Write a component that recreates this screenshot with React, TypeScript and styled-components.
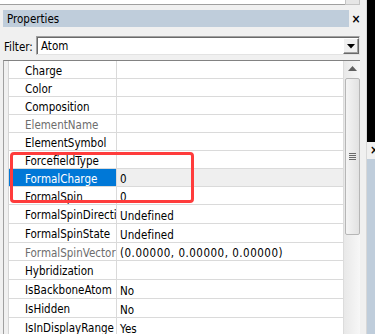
import React from 'react';
import styled, { createGlobalStyle } from 'styled-components';

const GlobalStyle = createGlobalStyle`
  html, body {
    margin: 0;
    padding: 0;
    background: #f0f0f0;
    font-family: "DejaVu Sans Condensed", "DejaVu Sans", "Liberation Sans", sans-serif;
    font-stretch: semi-condensed;
    font-size: 11.5px;
    color: #000;
  }
  #root {
    height: 334px;
    overflow: hidden;
  }
`;

interface PropRow {
  name: string;
  value?: string;
  readOnly?: boolean;
  selected?: boolean;
  height: number;
}

const rows: PropRow[] = [
  { name: 'Charge', height: 18 },
  { name: 'Color', height: 18 },
  { name: 'Composition', height: 18 },
  { name: 'ElementName', readOnly: true, height: 18 },
  { name: 'ElementSymbol', height: 18 },
  { name: 'ForcefieldType', height: 18 },
  { name: 'FormalCharge', value: '0', selected: true, height: 18 },
  { name: 'FormalSpin', value: '0', height: 18 },
  { name: 'FormalSpinDirection', value: 'Undefined', height: 19 },
  { name: 'FormalSpinState', value: 'Undefined', height: 19 },
  { name: 'FormalSpinVector', value: '(0.00000, 0.00000, 0.00000)', readOnly: true, height: 18 },
  { name: 'Hybridization', height: 19 },
  { name: 'IsBackboneAtom', value: 'No', height: 19 },
  { name: 'IsHidden', value: 'No', height: 19 },
  { name: 'IsInDisplayRange', value: 'Yes', height: 19 },
];

export default function App() {
  return (
    <>
      <GlobalStyle />
      <Window>
        <Panel>
          <TopStub>
            <StubBody />
            <StubScroll />
          </TopStub>

          <HeaderRow>
            <TitleBar>Properties</TitleBar>
            <CloseButton>×</CloseButton>
          </HeaderRow>

          <FilterRow>
            <FilterLabel>Filter:</FilterLabel>
            <Combo>
              <ComboText>Atom</ComboText>
              <DropButton>
                <svg width="8" height="5" viewBox="0 0 8 5">
                  <path d="M0 0 H8 L4 4.5 Z" fill="#000" />
                </svg>
              </DropButton>
            </Combo>
          </FilterRow>

          <Grid>
            <RowsArea>
              <Margin />
              <Rows>
                {rows.map((r) => (
                  <Row key={r.name} $h={r.height}>
                    <NameCell $selected={r.selected} $readOnly={r.readOnly}>
                      {r.name}
                    </NameCell>
                    <ValueCell $selected={r.selected} $wide={r.name === 'FormalSpinVector'}>
                      {r.value}
                    </ValueCell>
                  </Row>
                ))}
              </Rows>
              {/* annotation drawn over the grid */}
              <Highlight />
            </RowsArea>
            <ScrollBar>
              <ArrowBox>
                <svg width="9" height="5" viewBox="0 0 9 5">
                  <path d="M0 5 L4.5 0 L9 5 Z" fill="#606060" />
                </svg>
              </ArrowBox>
              <Thumb>
                <Grip>
                  <span />
                  <span />
                  <span />
                  <span />
                </Grip>
              </Thumb>
            </ScrollBar>
          </Grid>
        </Panel>

        <SideStrip>
          <SideBlack />
          <SideClose>×</SideClose>
          <SideHeader />
        </SideStrip>
      </Window>
    </>
  );
}

const Window = styled.div`
  display: flex;
  width: 375px;
  height: 334px;
  overflow: hidden;
`;

const Panel = styled.div`
  width: 366px;
  display: flex;
  flex-direction: column;
`;

const TopStub = styled.div`
  display: flex;
  height: 5px;
`;

const StubBody = styled.div`
  width: 345px;
  background: #fff;
  border-bottom: 1px solid #a0a0a0;
  box-sizing: border-box;
`;

const StubScroll = styled.div`
  width: 15px;
  background: #e6e6e6;
  border: 1px solid #c4c4c4;
  border-top: none;
  box-sizing: border-box;
`;

const HeaderRow = styled.div`
  display: flex;
  margin-top: 5px;
  padding-left: 3px;
  height: 17px;
`;

const TitleBar = styled.div`
  width: 346px;
  background: #bfcddb;
  display: flex;
  align-items: center;
  padding-left: 4px;
  box-sizing: border-box;
  color: #000;
`;

const CloseButton = styled.div`
  flex: 1;
  display: flex;
  align-items: center;
  justify-content: center;
  font-weight: bold;
  font-size: 12px;
  padding-right: 3px;
`;

const FilterRow = styled.div`
  display: flex;
  align-items: center;
  margin-top: 9px;
  height: 19px;
`;

const FilterLabel = styled.div`
  width: 36px;
  padding-left: 4px;
  padding-top: 3px;
  box-sizing: border-box;
`;

const Combo = styled.div`
  width: 324px;
  height: 19px;
  box-sizing: border-box;
  background: #fff;
  border-top: 1px solid #a0a0a0;
  border-left: 1px solid #a0a0a0;
  border-right: 1px solid #e3e3e3;
  border-bottom: 1px solid #e3e3e3;
  box-shadow: inset 1px 1px 0 #696969;
  display: flex;
  align-items: stretch;
`;

const ComboText = styled.div`
  flex: 1;
  display: flex;
  align-items: center;
  padding-left: 4px;
  padding-top: 1px;
`;

const DropButton = styled.div`
  width: 16px;
  margin: 1px 0 0 0;
  background: #f0f0f0;
  border-top: 1px solid #fff;
  border-left: 1px solid #fff;
  border-right: 1px solid #696969;
  border-bottom: 1px solid #696969;
  box-shadow: inset -1px -1px 0 #a0a0a0;
  box-sizing: border-box;
  display: flex;
  align-items: center;
  justify-content: center;
  padding-top: 1px;
`;

const Grid = styled.div`
  margin: 5px 0 0 3px;
  width: 357px;
  flex: 1;
  display: flex;
  background: #fff;
  border-top: 1px solid #828282;
  border-left: 1px solid #a0a0a0;
  box-sizing: border-box;
  overflow: hidden;
`;

const RowsArea = styled.div`
  position: relative;
  flex: 1;
  display: flex;
  border-right: 1px solid #dcdcdc;
`;

const Margin = styled.div`
  width: 4px;
  background: #f0f0f0;
  border-right: 1px solid #d4d4d4;
`;

const Rows = styled.div`
  flex: 1;
  display: flex;
  flex-direction: column;
`;

const Row = styled.div<{ $h: number }>`
  display: flex;
  height: ${(p) => p.$h}px;
  flex-shrink: 0;
  border-bottom: 1px solid #dadada;
  box-sizing: border-box;
`;

const NameCell = styled.div<{ $selected?: boolean; $readOnly?: boolean }>`
  width: 108px;
  padding: 2px 0 0 16px;
  box-sizing: border-box;
  border-right: 1px solid #dadada;
  white-space: nowrap;
  overflow: hidden;
  display: flex;
  align-items: center;
  background: ${(p) => (p.$selected ? '#0078d7' : '#fff')};
  color: ${(p) => (p.$selected ? '#fff' : p.$readOnly ? '#6d6d6d' : '#000')};
`;

const ValueCell = styled.div<{ $selected?: boolean; $wide?: boolean }>`
  flex: 1;
  padding: 3px 0 0 3px;
  white-space: nowrap;
  overflow: hidden;
  display: flex;
  align-items: center;
  letter-spacing: ${(p) => (p.$wide ? '0.5px' : '0.1px')};
  background: ${(p) => (p.$selected ? '#efefef' : '#fff')};
`;

const Highlight = styled.div`
  position: absolute;
  left: 6px;
  top: 91px;
  width: 184px;
  height: 51px;
  border: 3px solid #ff3c3c;
  border-radius: 4px;
  box-sizing: border-box;
  pointer-events: none;
`;

const ScrollBar = styled.div`
  width: 16px;
  background: linear-gradient(to right, #e8e8e8, #f7f7f7);
  display: flex;
  flex-direction: column;
  align-items: center;
`;

const ArrowBox = styled.div`
  height: 17px;
  width: 100%;
  display: flex;
  align-items: center;
  justify-content: center;
  padding-bottom: 2px;
  box-sizing: border-box;
`;

const Thumb = styled.div`
  width: 15px;
  height: 157px;
  box-sizing: border-box;
  border: 1px solid #b6b6b6;
  border-radius: 2px;
  background: linear-gradient(to right, #f4f4f4, #e2e2e2);
  display: flex;
  align-items: center;
  justify-content: center;
`;

const Grip = styled.div`
  display: flex;
  flex-direction: column;
  gap: 1px;
  span {
    display: block;
    width: 7px;
    height: 1px;
    background: #6a6a6a;
  }
`;

const SideStrip = styled.div`
  width: 9px;
  display: flex;
  flex-direction: column;
  border-left: 1px solid #d8d8d8;
  box-sizing: border-box;
`;

const SideBlack = styled.div`
  height: 142px;
  background: #000;
`;

const SideClose = styled.div`
  height: 17px;
  font-weight: bold;
  font-size: 12px;
  line-height: 17px;
  padding-left: 3px;
  overflow: hidden;
`;

const SideHeader = styled.div`
  flex: 1;
  background: #bfcddb;
`;
